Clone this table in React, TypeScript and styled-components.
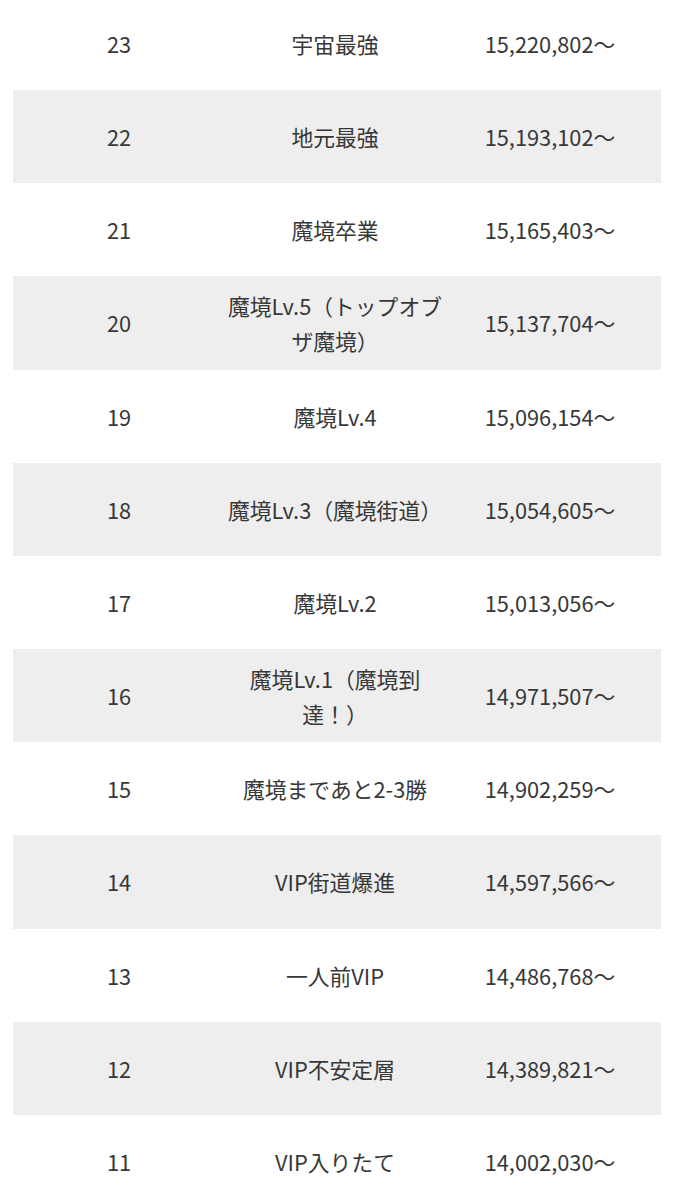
import React from "react";
import styled, { createGlobalStyle } from "styled-components";

const GlobalStyle = createGlobalStyle`
  html, body {
    margin: 0;
    padding: 0;
    background: #ffffff;
  }
  body {
    font-family: "Noto Sans CJK JP", "Noto Sans", sans-serif;
    color: #333333;
  }
`;

const Page = styled.div`
  padding: 0 13px;
  margin-top: -3.2px;
`;

const Table = styled.table`
  width: 100%;
  border-collapse: collapse;
  table-layout: fixed;
`;

const Col = styled.col<{ $w: number }>`
  width: ${(p) => p.$w}px;
`;

const Row = styled.tr<{ $shaded: boolean }>`
  background: ${(p) => (p.$shaded ? "#eeeeee" : "#ffffff")};
`;

const Cell = styled.td<{ $padRight?: number }>`
  height: 93.18px;
  padding: 0 ${(p) => p.$padRight ?? 0}px 0 0;
  text-align: center;
  vertical-align: middle;
  font-size: 21.8px;
  line-height: 35px;
  color: #383838;
`;

type Rank = { no: number; name: string; score: string };

const ranks: Rank[] = [
  { no: 23, name: "宇宙最強", score: "15,220,802〜" },
  { no: 22, name: "地元最強", score: "15,193,102〜" },
  { no: 21, name: "魔境卒業", score: "15,165,403〜" },
  { no: 20, name: "魔境Lv.5（トップオブザ魔境）", score: "15,137,704〜" },
  { no: 19, name: "魔境Lv.4", score: "15,096,154〜" },
  { no: 18, name: "魔境Lv.3（魔境街道）", score: "15,054,605〜" },
  { no: 17, name: "魔境Lv.2", score: "15,013,056〜" },
  { no: 16, name: "魔境Lv.1（魔境到達！）", score: "14,971,507〜" },
  { no: 15, name: "魔境まであと2-3勝", score: "14,902,259〜" },
  { no: 14, name: "VIP街道爆進", score: "14,597,566〜" },
  { no: 13, name: "一人前VIP", score: "14,486,768〜" },
  { no: 12, name: "VIP不安定層", score: "14,389,821〜" },
  { no: 11, name: "VIP入りたて", score: "14,002,030〜" },
];

export default function App() {
  return (
    <>
      <GlobalStyle />
      <Page>
        <Table>
          <colgroup>
            <Col $w={212} />
            <Col $w={220} />
            <Col $w={216} />
          </colgroup>
          <tbody>
            {ranks.map((r, i) => (
              <Row key={r.no} $shaded={i % 2 === 1}>
                <Cell>{r.no}</Cell>
                <Cell>{r.name}</Cell>
                <Cell $padRight={6}>{r.score}</Cell>
              </Row>
            ))}
          </tbody>
        </Table>
      </Page>
    </>
  );
}
